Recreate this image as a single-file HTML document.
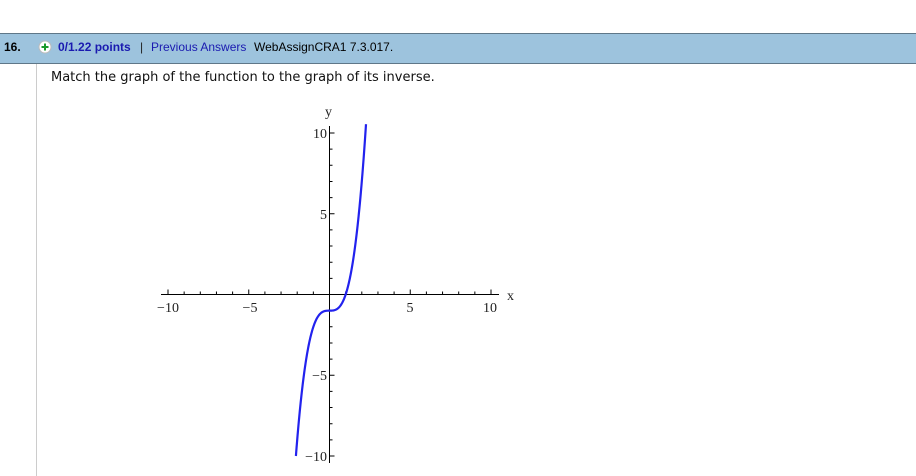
<!DOCTYPE html>
<html><head><style>
body{margin:0;width:916px;height:476px;background:#fff;overflow:hidden;position:relative;font-family:"Liberation Sans",Arial,sans-serif}
.band{position:absolute;left:0;top:33px;width:916px;height:29px;background:#9dc3dd;border-top:1px solid #5f7788;border-bottom:1px solid #5f7788;box-sizing:content-box}
.t{position:absolute;font-size:12px;top:40px;white-space:nowrap}
.vl{position:absolute;left:36px;top:64px;width:1px;height:412px;background:#ccc}
</style></head><body>
<div class="band"></div>
<div class="t" style="left:4px;font-weight:bold;color:#000">16.</div>
<svg style="position:absolute;left:38px;top:40px" width="14" height="14"><circle cx="7" cy="7" r="6" fill="#fff" stroke="#bbb"/><path d="M7 3.5v7M3.5 7h7" stroke="#1a9a2a" stroke-width="2"/></svg>
<div class="t" style="left:58px;font-weight:bold;color:#1a1ab0">0/1.22 points</div>
<div class="t" style="left:140px;color:#222">|</div>
<div class="t" style="left:151px;color:#1a1ab0">Previous Answers</div>
<div class="t" style="left:254px;color:#000">WebAssignCRA1 7.3.017.</div>
<div class="vl"></div>
<div style="position:absolute;left:51px;top:70px;font-family:'DejaVu Sans',sans-serif;font-size:13px;color:#111">Match the graph of the function to the graph of its inverse.</div>
<svg style="position:absolute;left:0;top:0" width="916" height="476" font-family="Liberation Serif,serif" font-size="14" fill="#222">
<g stroke="#000" stroke-width="1">
<line x1="161" y1="294.5" x2="499" y2="294.5"/>
<line x1="329.5" y1="126" x2="329.5" y2="463"/>
<path id="tx" d=""/>
</g>
<g text-anchor="middle">
<text x="168" y="312">−10</text><text x="250" y="312">−5</text><text x="410" y="312">5</text><text x="490" y="312">10</text>
</g>
<text x="507" y="300">x</text><text x="325" y="116">y</text>
<g text-anchor="end">
<text x="327" y="138">10</text><text x="327" y="219">5</text><text x="327" y="380">−5</text><text x="327" y="461">−10</text>
</g>
<path id="curve" fill="none" stroke="#2222ee" stroke-width="2.2" d=""/>
</svg>
<script>
var s=16.15,ox=329.5,oy=294.5,t='';
for(var i=-10;i<=10;i++){if(!i)continue;var x=ox+i*s,L=i%5?3:5;t+='M'+x+' '+oy+'v-'+L+'M'+ox+' '+(oy-i*s)+'h'+L;}
document.getElementById('tx').setAttribute('d',t);
var d='';for(var x=-2.08;x<=2.265;x+=0.02){var y=x*x*x-1;d+=(d?'L':'M')+(ox+x*s).toFixed(2)+' '+(oy-y*s).toFixed(2);}
document.getElementById('curve').setAttribute('d',d);
</script>
</body></html>
